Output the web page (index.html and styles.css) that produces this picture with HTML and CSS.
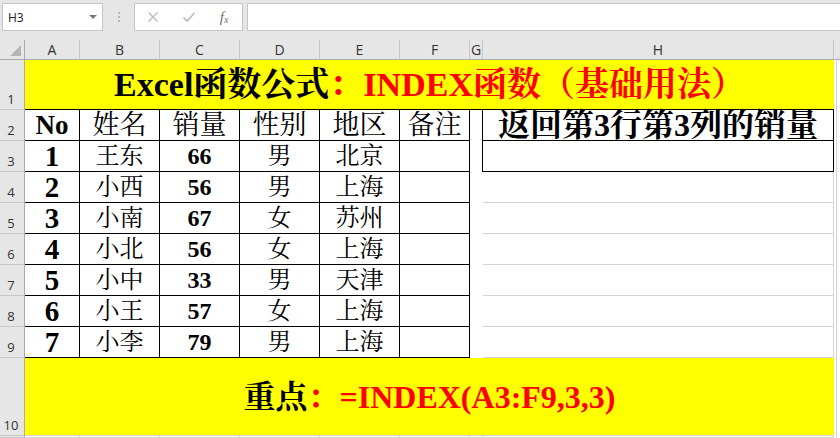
FILE: index.html
```html
<!DOCTYPE html>
<html lang="zh-CN">
<head>
    <meta charset="UTF-8">
    <title>INDEX函数（基础用法）</title>
    <link rel="stylesheet" href="styles.css">
</head>
<body>
<div class="app">

    <!-- Formula bar -->
    <div class="topbar">
        <div class="namebox">
            <span>H3</span>
            <span class="arrow"></span>
        </div>
        <div class="grip">
            <svg width="4" height="12" viewBox="0 0 4 12"><circle cx="2" cy="2" r="1" fill="#a6a6a6"/><circle cx="2" cy="6" r="1" fill="#a6a6a6"/><circle cx="2" cy="10" r="1" fill="#a6a6a6"/></svg>
        </div>
        <div class="fx-buttons">
            <span class="fx-btn">
                <svg width="12" height="12" viewBox="0 0 12 12"><path d="M1.5 1.5 L10.5 10.5 M10.5 1.5 L1.5 10.5" stroke="#b9b9b9" stroke-width="1.3" fill="none"/></svg>
            </span>
            <span class="fx-btn">
                <svg width="14" height="12" viewBox="0 0 14 12"><path d="M1.5 6.5 L5 10 L12.5 2" stroke="#b9b9b9" stroke-width="1.6" fill="none"/></svg>
            </span>
            <span class="fx-btn fx-label"><i>f<sub>x</sub></i></span>
        </div>
        <div class="formula-input"></div>
    </div>

    <!-- Sheet -->
    <div class="sheet">
        <div class="corner"><span class="tri"></span></div>
        <div class="ch">A</div>
        <div class="ch">B</div>
        <div class="ch">C</div>
        <div class="ch">D</div>
        <div class="ch">E</div>
        <div class="ch">F</div>
        <div class="ch">G</div>
        <div class="ch">H</div>
        <div class="ch ch-end"></div>

        <!-- row 1 -->
        <div class="rh">1</div>
        <div class="c banner title">Excel函数公式<span class="red">：INDEX函数（基础用法）</span></div>
        <div class="edge"></div>

        <!-- row 2 -->
        <div class="rh">2</div>
        <div class="c t head no-head">No</div>
        <div class="c t head">姓名</div>
        <div class="c t head">销量</div>
        <div class="c t head">性别</div>
        <div class="c t head">地区</div>
        <div class="c t head">备注</div>
        <div class="c g box"></div>
        <div class="c t ask">返回第3行第3列的销量</div>
        <div class="edge"></div>

        <!-- row 3 -->
        <div class="rh">3</div>
        <div class="c t no">1</div>
        <div class="c t txt">王东</div>
        <div class="c t qty">66</div>
        <div class="c t txt">男</div>
        <div class="c t txt">北京</div>
        <div class="c t"></div>
        <div class="c g box"></div>
        <div class="c t"></div>
        <div class="edge"></div>

        <!-- row 4 -->
        <div class="rh">4</div>
        <div class="c t no">2</div>
        <div class="c t txt">小西</div>
        <div class="c t qty">56</div>
        <div class="c t txt">男</div>
        <div class="c t txt">上海</div>
        <div class="c t"></div>
        <div class="c g"></div>
        <div class="c"></div>
        <div class="edge"></div>

        <!-- row 5 -->
        <div class="rh">5</div>
        <div class="c t no">3</div>
        <div class="c t txt">小南</div>
        <div class="c t qty">67</div>
        <div class="c t txt">女</div>
        <div class="c t txt">苏州</div>
        <div class="c t"></div>
        <div class="c g"></div>
        <div class="c"></div>
        <div class="edge"></div>

        <!-- row 6 -->
        <div class="rh">6</div>
        <div class="c t no">4</div>
        <div class="c t txt">小北</div>
        <div class="c t qty">56</div>
        <div class="c t txt">女</div>
        <div class="c t txt">上海</div>
        <div class="c t"></div>
        <div class="c g"></div>
        <div class="c"></div>
        <div class="edge"></div>

        <!-- row 7 -->
        <div class="rh">7</div>
        <div class="c t no">5</div>
        <div class="c t txt">小中</div>
        <div class="c t qty">33</div>
        <div class="c t txt">男</div>
        <div class="c t txt">天津</div>
        <div class="c t"></div>
        <div class="c g"></div>
        <div class="c"></div>
        <div class="edge"></div>

        <!-- row 8 -->
        <div class="rh">8</div>
        <div class="c t no">6</div>
        <div class="c t txt">小王</div>
        <div class="c t qty">57</div>
        <div class="c t txt">女</div>
        <div class="c t txt">上海</div>
        <div class="c t"></div>
        <div class="c g"></div>
        <div class="c"></div>
        <div class="edge"></div>

        <!-- row 9 -->
        <div class="rh">9</div>
        <div class="c t no">7</div>
        <div class="c t txt">小李</div>
        <div class="c t qty">79</div>
        <div class="c t txt">男</div>
        <div class="c t txt">上海</div>
        <div class="c t"></div>
        <div class="c g"></div>
        <div class="c"></div>
        <div class="edge"></div>

        <!-- row 10 -->
        <div class="rh">10</div>
        <div class="c banner key">重点<span class="red">：=INDEX(A3:F9,3,3)</span></div>
        <div class="edge"></div>

        <!-- row 11 (only its top edge shows) -->
        <div class="rh"></div>
        <div class="c"></div>
        <div class="c"></div>
        <div class="c"></div>
        <div class="c"></div>
        <div class="c"></div>
        <div class="c"></div>
        <div class="c"></div>
        <div class="c"></div>
        <div class="edge"></div>
    </div>

</div>
</body>
</html>
```

FILE: styles.css
```css
/* General */
body {
    margin: 0;
    background: #fff;
    font-family: "Open Sans", "Noto Sans", sans-serif;
    color: #222;
}

.app {
    width: 840px;
    height: 438px;
    overflow: hidden;
}

/* Formula bar */
.topbar {
    height: 40px;
    box-sizing: border-box;
    padding-top: 3px;
    background: #e6e6e6;
    display: flex;
    align-items: flex-start;
}

.namebox {
    margin-left: 2px;
    width: 101px;
    height: 28px;
    box-sizing: border-box;
    padding: 0 5px 0 5px;
    background: #fff;
    border: 1px solid #c6c6c6;
    display: flex;
    align-items: center;
    justify-content: space-between;
    font-size: 12px;
}

.namebox .arrow {
    width: 0;
    height: 0;
    border-left: 4px solid transparent;
    border-right: 4px solid transparent;
    border-top: 4px solid #7a7a7a;
}

.grip {
    width: 31px;
    height: 28px;
    display: flex;
    align-items: center;
    justify-content: center;
}

.fx-buttons {
    width: 109px;
    height: 28px;
    box-sizing: border-box;
    background: #fff;
    border: 1px solid #c6c6c6;
    display: flex;
}

.fx-btn {
    width: 36px;
    display: flex;
    align-items: center;
    justify-content: center;
}

.fx-label {
    font-family: "Liberation Serif", serif;
    font-size: 15px;
    color: #6e6e6e;
}

.fx-label sub {
    font-size: 10px;
    vertical-align: -1px;
}

.formula-input {
    margin-left: 4px;
    flex: 1;
    height: 28px;
    box-sizing: border-box;
    background: #fff;
    border: 1px solid #c6c6c6;
    border-right: none;
}

/* Sheet grid */
.sheet {
    display: grid;
    grid-template-columns: 25px 55px 80px 80px 80px 80px 70px 13px 351px 3px 1fr;
    grid-template-rows: 20px 50px repeat(8, 31px) 78px 1fr;
    height: 398px;
}

.sheet > div {
    box-sizing: border-box;
}

.corner {
    background: #e6e6e6;
    border-right: 1px solid #ababab;
    border-bottom: 1px solid #ababab;
    display: flex;
    align-items: flex-end;
    justify-content: flex-end;
    padding: 0 3px 3px 0;
}

.corner .tri {
    width: 0;
    height: 0;
    border-left: 11px solid transparent;
    border-bottom: 11px solid #b5b5b5;
}

.ch {
    background: #e6e6e6;
    border-right: 1px solid #c8c8c8;
    border-bottom: 1px solid #ababab;
    display: flex;
    align-items: center;
    justify-content: center;
    font-size: 14px;
    color: #333;
}

.ch-end {
    grid-column: span 2;
    border-right: none;
}

.rh {
    grid-column: 1;
    background: #e6e6e6;
    border-right: 1px solid #ababab;
    border-bottom: 1px solid #c8c8c8;
    display: flex;
    align-items: flex-end;
    justify-content: center;
    padding: 0 2px 1px 0;
    font-size: 13px;
    line-height: 1.2;
    color: #333;
}

/* Cells */
.c {
    border-right: 1px solid #d4d4d4;
    border-bottom: 1px solid #d4d4d4;
    display: flex;
    align-items: center;
    justify-content: center;
    white-space: nowrap;
    line-height: 1;
    font-family: "Liberation Serif", "Noto Serif CJK SC", "Noto Sans CJK SC", serif;
    color: #000;
}

.c.t {
    border-color: #000;
}

.c.g {
    border: none;
}

.c.g.box {
    border-right: 1px solid #000;
}

.edge {
    border-right: 1px solid #d4d4d4;
}

.banner {
    grid-column: span 8;
    background: #ffff00;
    font-weight: bold;
}

.title {
    font-size: 34px;
    border-right: none;
    border-bottom: 1px solid #000;
}

.key {
    font-size: 32px;
    border-right: none;
}

.red {
    color: #ff0000;
}

.head {
    font-size: 27px;
}

.no-head {
    font-weight: bold;
}

.ask {
    font-size: 32px;
    font-weight: bold;
}

.no {
    font-size: 29px;
    font-weight: bold;
}

.qty {
    font-size: 24px;
    font-weight: bold;
}

.txt {
    font-size: 24px;
}
```
